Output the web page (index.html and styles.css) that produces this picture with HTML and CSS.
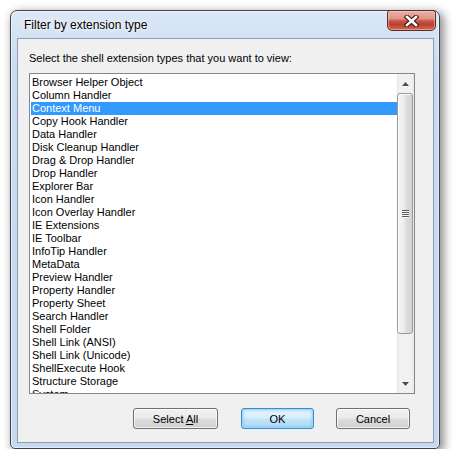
FILE: index.html
```html
<!DOCTYPE html>
<html>
<head>
<meta charset="utf-8">
<title>Filter by extension type</title>
<link rel="stylesheet" href="styles.css">
</head>
<body>
<div class="window">
  <div class="titlebar">
    <span class="title">Filter by extension type</span>
    <div class="close">
      <svg width="15" height="12" viewBox="0 0 15 12">
        <path d="M3 2 L12 10 M12 2 L3 10" stroke="#3a1712" stroke-width="4.6" stroke-linecap="square" fill="none"/>
        <path d="M3 2 L12 10 M12 2 L3 10" stroke="#ffffff" stroke-width="2.6" stroke-linecap="square" fill="none"/>
      </svg>
    </div>
  </div>
  <div class="client">
    <div class="label">Select the shell extension types that you want to view:</div>
    <div class="listbox">
      <ul class="items">
        <li>Browser Helper Object</li>
        <li>Column Handler</li>
        <li class="selected">Context Menu</li>
        <li>Copy Hook Handler</li>
        <li>Data Handler</li>
        <li>Disk Cleanup Handler</li>
        <li>Drag &amp; Drop Handler</li>
        <li>Drop Handler</li>
        <li>Explorer Bar</li>
        <li>Icon Handler</li>
        <li>Icon Overlay Handler</li>
        <li>IE Extensions</li>
        <li>IE Toolbar</li>
        <li>InfoTip Handler</li>
        <li>MetaData</li>
        <li>Preview Handler</li>
        <li>Property Handler</li>
        <li>Property Sheet</li>
        <li>Search Handler</li>
        <li>Shell Folder</li>
        <li>Shell Link (ANSI)</li>
        <li>Shell Link (Unicode)</li>
        <li>ShellExecute Hook</li>
        <li>Structure Storage</li>
        <li>System</li>
      </ul>
      <div class="scrollbar">
        <div class="sb-btn">
          <svg width="7" height="4" viewBox="0 0 7 4"><polygon points="0,4 7,4 3.5,0" fill="#4a4a4a"/></svg>
        </div>
        <div class="thumb"><div class="grip"></div></div>
        <div class="track"></div>
        <div class="sb-btn">
          <svg width="7" height="4" viewBox="0 0 7 4"><polygon points="0,0 7,0 3.5,4" fill="#4a4a4a"/></svg>
        </div>
      </div>
    </div>
    <div class="buttons">
      <button class="btn btn-select">Select <u>A</u>ll</button>
      <button class="btn btn-ok default">OK</button>
      <button class="btn btn-cancel">Cancel</button>
    </div>
  </div>
</div>
</body>
</html>
```
FILE: styles.css
```css
html, body {
  margin: 0;
  padding: 0;
  background: #ffffff;
}
body {
  font-family: "Liberation Sans", Arial, sans-serif;
  font-size: 11px;
  color: #000;
}
.window {
  position: relative;
  box-sizing: border-box;
  margin: 10px 0 0 10px;
  width: 430px;
  height: 439px;
  border: 1px solid #3d434c;
  border-radius: 7px 7px 5px 5px;
  background: linear-gradient(180deg, #dce8f6 0px, #d3e2f4 26px, #c9dbf1 60px, #c6d9f0 100%);
  box-shadow: 3px 3px 10px 1px rgba(0, 0, 0, 0.45), inset 0 0 0 1px rgba(255, 255, 255, 0.55);
  padding: 0 5px 5px 6px;
  display: flex;
  flex-direction: column;
}
.titlebar {
  height: 27px;
  box-sizing: border-box;
  padding: 1px 0 0 7px;
  display: flex;
  align-items: center;
}
.title {
  font-size: 12px;
  color: #000;
  text-shadow: 0 0 6px rgba(255, 255, 255, 0.9), 0 0 3px rgba(255, 255, 255, 0.9);
}
.close {
  position: absolute;
  top: -1px;
  right: 3px;
  width: 47px;
  height: 19px;
  border: 1px solid #5e2a24;
  border-radius: 3px 3px 5px 5px;
  background: linear-gradient(180deg, #eab1a6 0%, #de9486 40%, #c9574a 52%, #bb3f31 70%, #d06a52 100%);
  box-shadow: inset 0 0 0 1px rgba(255, 220, 210, 0.45);
  display: flex;
  align-items: center;
  justify-content: center;
}
.client {
  flex: 1;
  border: 1px solid #8e9db2;
  background: #f0f0f0;
  padding: 13px 0 0 11px;
  display: flex;
  flex-direction: column;
}
.label {
  line-height: 13px;
  height: 13px;
}
.listbox {
  margin-top: 8px;
  box-sizing: border-box;
  width: 386px;
  height: 321px;
  border: 1px solid #828790;
  background: #ffffff;
  display: flex;
}
.items {
  flex: 1;
  list-style: none;
  margin: 0;
  padding: 2px 0 0 1px;
  overflow: hidden;
}
.items li {
  height: 13px;
  line-height: 13px;
  padding-left: 1px;
  white-space: nowrap;
}
.items li.selected {
  background: #3399ff;
  color: #ffffff;
}
.scrollbar {
  width: 17px;
  display: flex;
  flex-direction: column;
  background: linear-gradient(90deg, #e4e4e4 0px, #f1f1f1 2px, #f1f1f1 14px, #e9e9e9 17px);
}
.sb-btn {
  height: 19px;
  display: flex;
  align-items: center;
  justify-content: center;
}
.sb-btn svg {
  filter: drop-shadow(0 1px 0 rgba(255, 255, 255, 0.9));
}
.thumb {
  box-sizing: border-box;
  width: 16px;
  height: 241px;
  border: 1px solid #9a9a9a;
  border-radius: 3px;
  background: linear-gradient(90deg, #f4f4f4 0%, #ececec 45%, #dedede 55%, #d2d2d2 100%);
  box-shadow: inset 1px 1px 0 rgba(255, 255, 255, 0.9);
  display: flex;
  align-items: center;
  justify-content: center;
}
.grip {
  width: 7px;
  height: 8px;
  background: repeating-linear-gradient(180deg, #5a5a5a 0px, #5a5a5a 1px, #f6f6f6 1px, #f6f6f6 2px);
}
.track {
  flex: 1;
}
.buttons {
  margin-top: 14px;
  display: flex;
  justify-content: flex-end;
  padding-right: 23px;
}
.btn {
  box-sizing: border-box;
  height: 21px;
  margin: 0;
  padding: 0;
  font-family: "Liberation Sans", Arial, sans-serif;
  font-size: 11px;
  color: #000;
  border: 1px solid #707070;
  border-radius: 3px;
  background: linear-gradient(180deg, #f2f2f2 0%, #ebebeb 48%, #dddddd 52%, #cfcfcf 100%);
  box-shadow: inset 0 0 0 1px rgba(255, 255, 255, 0.75);
}
.btn u {
  text-decoration: underline;
}
.btn-select {
  width: 85px;
  margin-right: 23px;
}
.btn-ok {
  width: 73px;
  margin-right: 22px;
}
.btn-cancel {
  width: 74px;
}
.btn.default {
  border-color: #3c8ad0;
  background: linear-gradient(180deg, #e6f4fc 0%, #d6eefb 48%, #c2e4f8 52%, #add8f3 100%);
  box-shadow: inset 0 0 0 1px #9fd8f9, inset 0 0 3px 1px rgba(80, 180, 240, 0.6);
}
```
